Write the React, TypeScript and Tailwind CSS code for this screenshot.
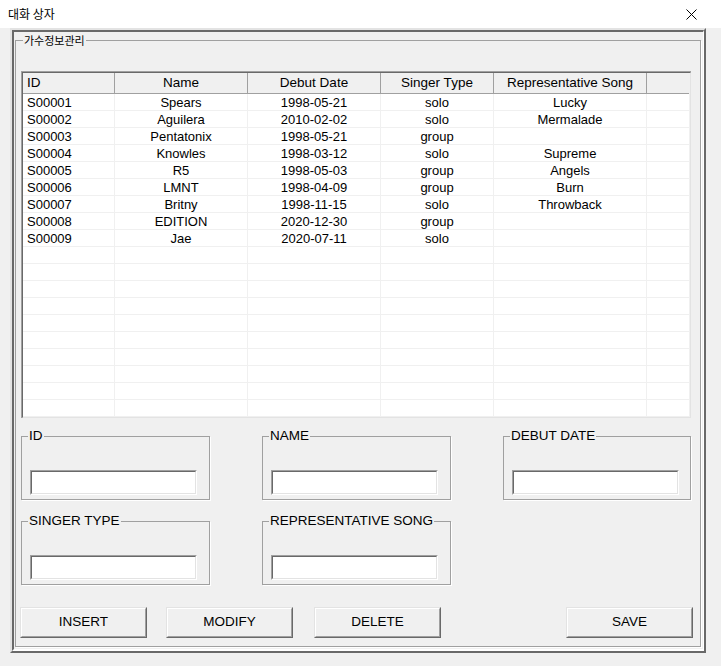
import React from 'react';

type Singer = { id: string; name: string; debut: string; type: string; song: string };

const singers: Singer[] = [
  { id: 'S00001', name: 'Spears', debut: '1998-05-21', type: 'solo', song: 'Lucky' },
  { id: 'S00002', name: 'Aguilera', debut: '2010-02-02', type: 'solo', song: 'Mermalade' },
  { id: 'S00003', name: 'Pentatonix', debut: '1998-05-21', type: 'group', song: '' },
  { id: 'S00004', name: 'Knowles', debut: '1998-03-12', type: 'solo', song: 'Supreme' },
  { id: 'S00005', name: 'R5', debut: '1998-05-03', type: 'group', song: 'Angels' },
  { id: 'S00006', name: 'LMNT', debut: '1998-04-09', type: 'group', song: 'Burn' },
  { id: 'S00007', name: 'Britny', debut: '1998-11-15', type: 'solo', song: 'Throwback' },
  { id: 'S00008', name: 'EDITION', debut: '2020-12-30', type: 'group', song: '' },
  { id: 'S00009', name: 'Jae', debut: '2020-07-11', type: 'solo', song: '' },
];

const TOTAL_ROWS = 19;

function HeaderCell({ children, left, last }: { children?: React.ReactNode; left?: boolean; last?: boolean }) {
  return (
    <div
      className={`h-[21px] flex items-center border-b border-[#a0a0a0] bg-[#f0f0f0] text-[13.5px] ${
        last ? '' : 'border-r border-r-[#a0a0a0]'
      } ${left ? 'justify-start pl-[4px]' : 'justify-center'}`}
    >
      {children}
    </div>
  );
}

function BodyCell({ children, left, last }: { children?: React.ReactNode; left?: boolean; last?: boolean }) {
  return (
    <div
      className={`h-[17px] flex items-center pt-[2px] border-b border-[#f0f0f0] bg-white ${
        last ? '' : 'border-r'
      } ${left ? 'justify-start pl-[4px]' : 'justify-center'}`}
    >
      {children}
    </div>
  );
}

function SingerList() {
  const blanks: (Singer | null)[] = [...singers];
  while (blanks.length < TOTAL_ROWS) blanks.push(null);

  return (
    <div className="w-[670px] border-t border-l border-[#a0a0a0] border-r-white border-b-white">
      <div className="border-t border-l border-[#696969] border-r border-b border-r-[#e3e3e3] border-b-[#e3e3e3]">
        <div className="grid grid-cols-[92px_133px_133px_113px_153px_42px]">
          <HeaderCell left>ID</HeaderCell>
          <HeaderCell>Name</HeaderCell>
          <HeaderCell>Debut Date</HeaderCell>
          <HeaderCell>Singer Type</HeaderCell>
          <HeaderCell>Representative Song</HeaderCell>
          <HeaderCell last />
          {blanks.map((s, i) => (
            <React.Fragment key={i}>
              <BodyCell left>{s?.id}</BodyCell>
              <BodyCell>{s?.name}</BodyCell>
              <BodyCell>{s?.debut}</BodyCell>
              <BodyCell>{s?.type}</BodyCell>
              <BodyCell>{s?.song}</BodyCell>
              <BodyCell last />
            </React.Fragment>
          ))}
        </div>
      </div>
    </div>
  );
}

function FieldBox({ label, width }: { label: string; width: string }) {
  return (
    <fieldset className={`${width} h-[71px] border border-[#a0a0a0] shadow-[1px_1px_0_#fff]`}>
      <legend className="ml-[6px] px-[1px] text-[13.5px] leading-[14px]">{label}</legend>
      <div className="ml-[8px] mt-[27px] w-[167px] h-[25px] border-t border-l border-[#a0a0a0] border-r border-b border-r-white border-b-white">
        <div className="h-full border-t border-l border-[#696969] border-r border-b border-r-[#e3e3e3] border-b-[#e3e3e3] bg-white" />
      </div>
    </fieldset>
  );
}

function WinButton({ children, className = '' }: { children: React.ReactNode; className?: string }) {
  return (
    <button
      className={`w-[127px] h-[31px] border border-t-[#e3e3e3] border-l-[#e3e3e3] border-r-[#696969] border-b-[#696969] bg-[#f0f0f0] p-0 ${className}`}
    >
      <div className="h-full flex items-center justify-center border border-t-white border-l-white border-r-[#a0a0a0] border-b-[#a0a0a0] text-[13.5px]">
        {children}
      </div>
    </button>
  );
}

export default function App() {
  return (
    <div
      className="w-[721px] h-[666px] bg-[#f0f0f0] flex flex-col text-black"
      style={{ fontFamily: '"Liberation Sans", Arial, "Noto Sans CJK KR", sans-serif' }}
    >
      {/* title bar */}
      <div className="h-[28px] bg-white flex items-center justify-between pl-[8px] pr-[24px] shrink-0">
        <span className="text-[12px]" style={{ fontFamily: '"Noto Sans CJK KR", sans-serif' }}>
          대화 상자
        </span>
        <svg width="11" height="11" viewBox="0 0 11 11" className="text-black">
          <path d="M0.5 0.5 L10.5 10.5 M10.5 0.5 L0.5 10.5" stroke="currentColor" strokeWidth="1" />
        </svg>
      </div>

      {/* dialog frame */}
      <div className="ml-[10px] w-[696px] h-[625px] border-2 border-t-[#e3e3e3] border-l-[#e3e3e3] border-r-[#696969] border-b-[#696969]">
        <div className="h-full border-t-2 border-l-2 border-r border-b-2 border-t-[#696969] border-l-[#696969] border-r-white border-b-white pl-[1px] pr-[2px] pt-[1px] pb-[2px]">
          <fieldset className="h-full border border-[#a0a0a0] shadow-[1px_1px_0_#fff] pl-[5px]">
            <legend
              className="ml-[2px] px-[1px] text-[11px] leading-[14px]"
              style={{ fontFamily: '"Noto Sans CJK KR", sans-serif' }}
            >
              가수정보관리
            </legend>

            <div className="mt-[24px] text-[13px]">
              <SingerList />
            </div>

            <div className="mt-[11px] flex gap-[52px]">
              <FieldBox label="ID" width="w-[189px]" />
              <FieldBox label="NAME" width="w-[189px]" />
              <FieldBox label="DEBUT DATE" width="w-[188px]" />
            </div>

            <div className="mt-[14px] flex gap-[52px]">
              <FieldBox label="SINGER TYPE" width="w-[189px]" />
              <FieldBox label="REPRESENTATIVE SONG" width="w-[189px]" />
            </div>

            <div className="mt-[22px] flex pr-[7px]">
              <WinButton className="-ml-[1px]">INSERT</WinButton>
              <WinButton className="ml-[19px]">MODIFY</WinButton>
              <WinButton className="ml-[21px]">DELETE</WinButton>
              <WinButton className="ml-auto">SAVE</WinButton>
            </div>
          </fieldset>
        </div>
      </div>
    </div>
  );
}
